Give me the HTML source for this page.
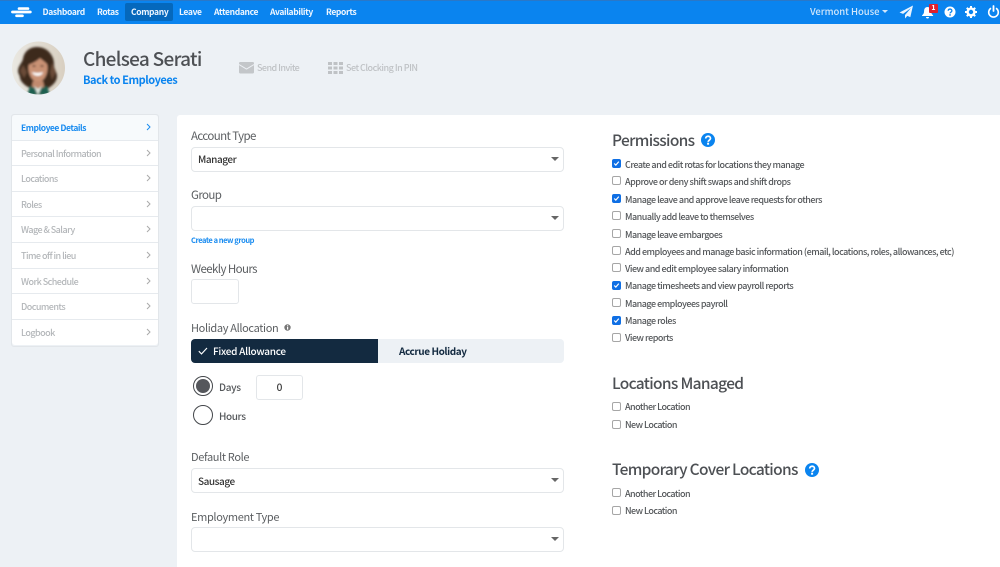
<!DOCTYPE html>
<html><head><meta charset="utf-8"><style>
html,body{margin:0;padding:0}
body{width:1000px;height:567px;overflow:hidden;background:#edf1f5;position:relative;font-family:"Noto Sans CJK SC","Liberation Sans",sans-serif;color:#555}
.t{position:absolute;white-space:nowrap;line-height:14px}
.b{position:absolute;box-sizing:border-box}
.nav{color:#eef6ff;font-size:8.5px;font-weight:700;top:5px;letter-spacing:-.35px}
.side{position:absolute;left:12px;width:146px;height:25.6px;box-sizing:border-box;background:#fff;border-bottom:1px solid #e6eaee}
.side span{position:absolute;left:9px;top:6px;font-size:9px;font-weight:500;color:#b4b7ba;line-height:14px;white-space:nowrap;letter-spacing:-.55px}
.side svg{position:absolute;left:134px;top:8px}
.lab{font-size:11.5px;color:#5c5f62;left:191px;letter-spacing:-.6px}
.lab.s{font-size:11px;letter-spacing:-.35px}
.sel{position:absolute;left:191px;width:373px;height:25px;box-sizing:border-box;background:#fff;border:1px solid #e3e6e9;border-radius:4px;font-size:10px;letter-spacing:-.45px;font-weight:500;color:#333;padding:3px 6px;line-height:15px}
.sel:after{content:"";position:absolute;right:4px;top:9px;border-left:4px solid transparent;border-right:4px solid transparent;border-top:4px solid #666}
.cb{position:absolute;left:612px;width:7px;height:7px;border:1px solid #a6a6a6;border-radius:2px;background:#fff}
.cb.on{background:#0f6fe4;border-color:#0f6fe4}
.cb.on svg{position:absolute;left:0;top:0}
.pl{font-size:9px;font-weight:500;color:#55585b;left:625px;letter-spacing:-.5px}
.h{font-size:15.5px;font-weight:500;color:#4d5054;left:612px;line-height:20px;letter-spacing:-.67px}
</style></head><body>
<div class="b" style="left:0;top:0;width:1000px;height:24px;background:#0a84ef;border-top:1px solid #2a78c8"></div>
<svg class="b" style="left:11px;top:7px" width="21" height="11" viewBox="0 0 21 11"><g fill="none" stroke="#fff" stroke-linecap="round"><path d="M8 1.600H17" stroke-width="2.600"/><path d="M1.500 5H19.300" stroke-width="2.800"/><path d="M5.500 8.800H11.500" stroke-width="2.600"/></g></svg>
<div class="b" style="left:125px;top:3px;width:48px;height:18px;background:#0568bc;border-radius:2px"></div>
<div class="t nav" style="left:42.500px">Dashboard</div>
<div class="t nav" style="left:97px">Rotas</div>
<div class="t nav" style="left:131px">Company</div>
<div class="t nav" style="left:179px">Leave</div>
<div class="t nav" style="left:214px">Attendance</div>
<div class="t nav" style="left:270px">Availability</div>
<div class="t nav" style="left:326px">Reports</div>
<div class="t" style="left:810px;top:4px;font-size:9.500px;font-weight:500;color:#cfe6fb;letter-spacing:-.05px">Vermont House</div>
<div class="b" style="left:882px;top:10px;border-left:3px solid transparent;border-right:3px solid transparent;border-top:3px solid #cfe6fb"></div>
<svg class="b" style="left:899px;top:5px" width="15" height="14" viewBox="0 0 15 14"><path d="M14 .5L.5 7.500l3.600 1.400L12 3 6 10v3.500l2.300-2.600 3 1.200z" fill="#eaf4ff"/></svg>
<svg class="b" style="left:921px;top:5px" width="14" height="14" viewBox="0 0 14 14"><path d="M6.500 2c-2.400 0-3.400 2-3.400 4 0 2.200-.8 3.300-2 4.300V11h11v-.7c-1.200-1-2-2.100-2-4.300 0-2-1.200-4-3.600-4zM5 12h3a1.500 1.500 0 0 1-3 0z" fill="#fff"/></svg>
<div class="b" style="left:929px;top:4px;width:9px;height:9px;background:#e0202c;border-radius:1px;color:#fff;font-size:7px;font-weight:700;line-height:9px;text-align:center">1</div>
<svg class="b" style="left:944px;top:6px" width="12" height="12" viewBox="0 0 12 12"><circle cx="6" cy="6" r="5.500" fill="#fff"/><path d="M4.200 4.800c0-2.300 3.700-2.300 3.700-.1 0 1.400-1.800 1.400-1.800 2.700" fill="none" stroke="#0a84ef" stroke-width="1.300"/><rect x="5.300" y="8.200" width="1.500" height="1.500" fill="#0a84ef"/></svg>
<svg class="b" style="left:965px;top:6px" width="12" height="12" viewBox="0 0 12 12"><circle cx="6" cy="6" r="3.400" fill="none" stroke="#fff" stroke-width="2.400"/><g stroke="#fff" stroke-width="2"><path d="M6 0v2.500M6 9.500V12M0 6h2.500M9.500 6H12M1.800 1.800l1.700 1.700M8.500 8.500l1.700 1.700M1.800 10.200l1.700-1.700M8.500 3.500l1.700-1.700"/></g></svg>
<svg class="b" style="left:987px;top:5px" width="13" height="13" viewBox="0 0 13 13"><path d="M4 3.200a4.800 4.800 0 1 0 5 0" fill="none" stroke="#fff" stroke-width="1.600"/><path d="M6.500 1v5" stroke="#fff" stroke-width="1.800" stroke-linecap="round"/></svg>

<svg class="b" style="left:12px;top:41px" width="54" height="54" viewBox="0 0 54 54"><defs><clipPath id="c"><circle cx="26.500" cy="27" r="26.500"/></clipPath><filter id="f"><feGaussianBlur stdDeviation="1.100"/></filter><linearGradient id="bg" x1="0" x2="1"><stop offset="0" stop-color="#eae8e2"/><stop offset="1" stop-color="#d8cfc0"/></linearGradient></defs><g clip-path="url(#c)"><rect width="54" height="54" fill="url(#bg)"/><g filter="url(#f)"><path d="M25 6C17 6 12 11 11 18c-1 4-5 7-5 12 0 3 2 4 2 7 1 5 7 9 12 11h15c5-3 10-7 10-13 0-4-3-7-3-11 0-5-1-8-4-12-3-4-8-6-13-6z" fill="#3d2a1e"/><path d="M11 24l-3 6 4 7 3-6zM40 22l4 9-4 8-2-8z" fill="#6a4c38"/><path d="M26 15c-6 0-9.500 5-9.500 12 0 7 4 14 9.500 14s9.500-7 9.500-14c0-7-3.500-12-9.500-12z" fill="#c99274"/><path d="M16 24c2-7 7-10 12-10 4 0 7 4 8 10-4-4-6-5-8-7-3 3-7 5-12 7z" fill="#3d2a1e"/><path d="M20 31c3.500 1.300 7.500 1.300 11 0-1 5-9.500 5-11 0z" fill="#fff"/><path d="M20.500 25h3M28.500 25h3" stroke="#3a2418" stroke-width="1.200"/><path d="M21 40h10l3 14H18z" fill="#c08a6e"/><path d="M18 45l8 3 9-3 3 9H15z" fill="#1f5f50"/><path d="M22 45l4 9 4-9-4 3z" fill="#dfe9e2"/></g></g></svg>
<div class="t" style="left:83px;top:46px;font-size:19px;line-height:26px;font-weight:500;color:#4d5054;letter-spacing:-.7px">Chelsea Serati</div>
<div class="t" style="left:83px;top:73px;font-size:11px;font-weight:700;color:#0a84ef;letter-spacing:-.45px">Back to Employees</div>
<svg class="b" style="left:239px;top:62px" width="15" height="12" viewBox="0 0 15 12"><rect width="15" height="11.500" rx="1.200" fill="#c3c6c9"/><path d="M0 2.500l7.500 4.500L15 2.500" fill="none" stroke="#edf1f5" stroke-width="1"/></svg>
<div class="t" style="left:257px;top:61px;font-size:9px;font-weight:500;color:#bfc2c5;letter-spacing:-.55px">Send Invite</div>
<svg class="b" style="left:328px;top:62px" width="15" height="12" viewBox="0 0 15 12"><g fill="#bfc2c5"><rect width="4" height="3" x="0" y="0"/><rect width="4" height="3" x="5.500" y="0"/><rect width="4" height="3" x="11" y="0"/><rect width="4" height="3" x="0" y="4.500"/><rect width="4" height="3" x="5.500" y="4.500"/><rect width="4" height="3" x="11" y="4.500"/><rect width="4" height="3" x="0" y="9"/><rect width="4" height="3" x="5.500" y="9"/><rect width="4" height="3" x="11" y="9"/></g></svg>
<div class="t" style="left:346px;top:61px;font-size:9px;font-weight:500;color:#bfc2c5;letter-spacing:-.5px">Set Clocking In PIN</div>

<div class="b" style="left:11px;top:114px;width:148px;height:232.500px;border:1px solid #e2e6ea;border-radius:3px"></div>
<div class="side" style="top:115px;background:#f7fafc;border-radius:3px 3px 0 0"><span style="color:#1a8cf0;font-weight:700;font-size:8.500px;letter-spacing:-.45px">Employee Details</span><svg width="5" height="8" viewBox="0 0 5 8"><path d="M1 1l3 3-3 3" fill="none" stroke="#1a8cf0"/></svg></div>
<div class="side" style="top:140.600px"><span>Personal Information</span><svg width="5" height="8" viewBox="0 0 5 8"><path d="M1 1l3 3-3 3" fill="none" stroke="#aaa"/></svg></div>
<div class="side" style="top:166.200px"><span>Locations</span><svg width="5" height="8" viewBox="0 0 5 8"><path d="M1 1l3 3-3 3" fill="none" stroke="#aaa"/></svg></div>
<div class="side" style="top:191.800px"><span>Roles</span><svg width="5" height="8" viewBox="0 0 5 8"><path d="M1 1l3 3-3 3" fill="none" stroke="#aaa"/></svg></div>
<div class="side" style="top:217.400px"><span>Wage &amp; Salary</span><svg width="5" height="8" viewBox="0 0 5 8"><path d="M1 1l3 3-3 3" fill="none" stroke="#aaa"/></svg></div>
<div class="side" style="top:243px"><span>Time off in lieu</span><svg width="5" height="8" viewBox="0 0 5 8"><path d="M1 1l3 3-3 3" fill="none" stroke="#aaa"/></svg></div>
<div class="side" style="top:268.600px"><span>Work Schedule</span><svg width="5" height="8" viewBox="0 0 5 8"><path d="M1 1l3 3-3 3" fill="none" stroke="#aaa"/></svg></div>
<div class="side" style="top:294.200px"><span>Documents</span><svg width="5" height="8" viewBox="0 0 5 8"><path d="M1 1l3 3-3 3" fill="none" stroke="#aaa"/></svg></div>
<div class="side" style="top:319.800px;height:25.700px;border-bottom:0;border-radius:0 0 3px 3px"><span>Logbook</span><svg width="5" height="8" viewBox="0 0 5 8"><path d="M1 1l3 3-3 3" fill="none" stroke="#aaa"/></svg></div>

<div class="b" style="left:177px;top:115px;width:823px;height:452px;background:#fff;border-radius:3px 0 0 0"></div>

<div class="t lab" style="top:129px">Account Type</div>
<div class="sel" style="top:147px">Manager</div>
<div class="t lab" style="top:188px">Group</div>
<div class="sel" style="top:206px"></div>
<div class="t" style="left:191px;top:234px;font-size:7.500px;font-weight:700;color:#1a8cf0;letter-spacing:-.45px">Create a new group</div>
<div class="t lab" style="top:262px">Weekly Hours</div>
<div class="b" style="left:191px;top:279px;width:48px;height:25px;background:#fff;border:1px solid #e3e6e9;border-radius:3px"></div>
<div class="t lab s" style="top:321px">Holiday Allocation</div>
<svg class="b" style="left:284px;top:324px" width="7" height="7" viewBox="0 0 7 7"><circle cx="3.500" cy="3.500" r="3.200" fill="#777"/><rect x="3" y="3" width="1.200" height="2.600" fill="#fff"/><rect x="3" y="1.300" width="1.200" height="1.100" fill="#fff"/></svg>
<div class="b" style="left:191px;top:339px;width:373px;height:24px;background:#edf1f5;border-radius:4px"></div>
<div class="b" style="left:191px;top:339px;width:187px;height:24px;background:#132a40;border-radius:4px 0 0 4px"></div>
<svg class="b" style="left:198px;top:347px" width="10" height="8" viewBox="0 0 10 8"><path d="M.8 4.200l2.700 2.700L9 1" fill="none" stroke="#fff" stroke-width="1.100"/></svg>
<div class="t" style="left:213px;top:344px;font-size:10px;font-weight:500;color:#fff;letter-spacing:-.27px">Fixed Allowance</div>
<div class="t" style="left:399px;top:344px;font-size:10px;font-weight:700;color:#132a40;letter-spacing:-.43px">Accrue Holiday</div>
<div class="b" style="left:193px;top:376px;width:20px;height:20px;border:1.500px solid #44474b;border-radius:50%;background:#fff"></div>
<div class="b" style="left:196px;top:379px;width:14px;height:14px;border-radius:50%;background:#55575c"></div>
<div class="t" style="left:219px;top:380px;font-size:10px;font-weight:500;color:#55585b;letter-spacing:-.3px">Days</div>
<div class="b" style="left:256px;top:375px;width:47px;height:25px;background:#fff;border:1px solid #e3e6e9;border-radius:3px;text-align:center;font-size:10.500px;font-weight:500;color:#444;line-height:23px">0</div>
<div class="b" style="left:193px;top:405px;width:20px;height:20px;border:1.500px solid #44474b;border-radius:50%;background:#fff"></div>
<div class="t" style="left:219px;top:409px;font-size:10px;font-weight:500;color:#55585b;letter-spacing:-.4px">Hours</div>
<div class="t lab s" style="top:450px">Default Role</div>
<div class="sel" style="top:468px;padding-top:4px">Sausage</div>
<div class="t lab s" style="top:510px">Employment Type</div>
<div class="sel" style="top:527px"></div>

<div class="t h" style="top:130px">Permissions</div>
<svg class="b" style="left:701px;top:133px" width="14" height="14" viewBox="0 0 14 14"><circle cx="7" cy="7" r="7" fill="#0a84ef"/><path d="M4.700 5.500c0-3 4.800-3 4.800-.1 0 1.800-2.400 1.700-2.400 3.500" fill="none" stroke="#fff" stroke-width="1.700"/><rect x="6.100" y="9.700" width="2" height="2" fill="#fff"/></svg>
<div class="cb on" style="top:159px"><svg width="7" height="7" viewBox="0 0 7 7"><path d="M1.200 3.500l1.600 1.600L5.800 1.600" fill="none" stroke="#fff" stroke-width="1.200"/></svg></div><div class="t pl" style="top:158px">Create and edit rotas for locations they manage</div>
<div class="cb" style="top:176px"></div><div class="t pl" style="top:175px">Approve or deny shift swaps and shift drops</div>
<div class="cb on" style="top:194px"><svg width="7" height="7" viewBox="0 0 7 7"><path d="M1.200 3.500l1.600 1.600L5.800 1.600" fill="none" stroke="#fff" stroke-width="1.200"/></svg></div><div class="t pl" style="top:193px">Manage leave and approve leave requests for others</div>
<div class="cb" style="top:211px"></div><div class="t pl" style="top:210px">Manually add leave to themselves</div>
<div class="cb" style="top:229px"></div><div class="t pl" style="top:228px">Manage leave embargoes</div>
<div class="cb" style="top:246px"></div><div class="t pl" style="top:245px">Add employees and manage basic information (email, locations, roles, allowances, etc)</div>
<div class="cb" style="top:263px"></div><div class="t pl" style="top:262px">View and edit employee salary information</div>
<div class="cb on" style="top:281px"><svg width="7" height="7" viewBox="0 0 7 7"><path d="M1.200 3.500l1.600 1.600L5.800 1.600" fill="none" stroke="#fff" stroke-width="1.200"/></svg></div><div class="t pl" style="top:279px">Manage timesheets and view payroll reports</div>
<div class="cb" style="top:298px"></div><div class="t pl" style="top:297px">Manage employees payroll</div>
<div class="cb on" style="top:316px"><svg width="7" height="7" viewBox="0 0 7 7"><path d="M1.200 3.500l1.600 1.600L5.800 1.600" fill="none" stroke="#fff" stroke-width="1.200"/></svg></div><div class="t pl" style="top:314px">Manage roles</div>
<div class="cb" style="top:333px"></div><div class="t pl" style="top:331px">View reports</div>
<div class="t h" style="top:373px">Locations Managed</div>
<div class="cb" style="top:402px"></div><div class="t pl" style="top:400px;letter-spacing:-.55px">Another Location</div>
<div class="cb" style="top:420px"></div><div class="t pl" style="top:418px;letter-spacing:-.55px">New Location</div>
<div class="t h" style="top:459px">Temporary Cover Locations</div>
<svg class="b" style="left:805px;top:463px" width="14" height="14" viewBox="0 0 14 14"><circle cx="7" cy="7" r="7" fill="#0a84ef"/><path d="M4.700 5.500c0-3 4.800-3 4.800-.1 0 1.800-2.400 1.700-2.400 3.500" fill="none" stroke="#fff" stroke-width="1.700"/><rect x="6.100" y="9.700" width="2" height="2" fill="#fff"/></svg>
<div class="cb" style="top:488px"></div><div class="t pl" style="top:487px;letter-spacing:-.55px">Another Location</div>
<div class="cb" style="top:506px"></div><div class="t pl" style="top:504px;letter-spacing:-.55px">New Location</div>
</body></html>
